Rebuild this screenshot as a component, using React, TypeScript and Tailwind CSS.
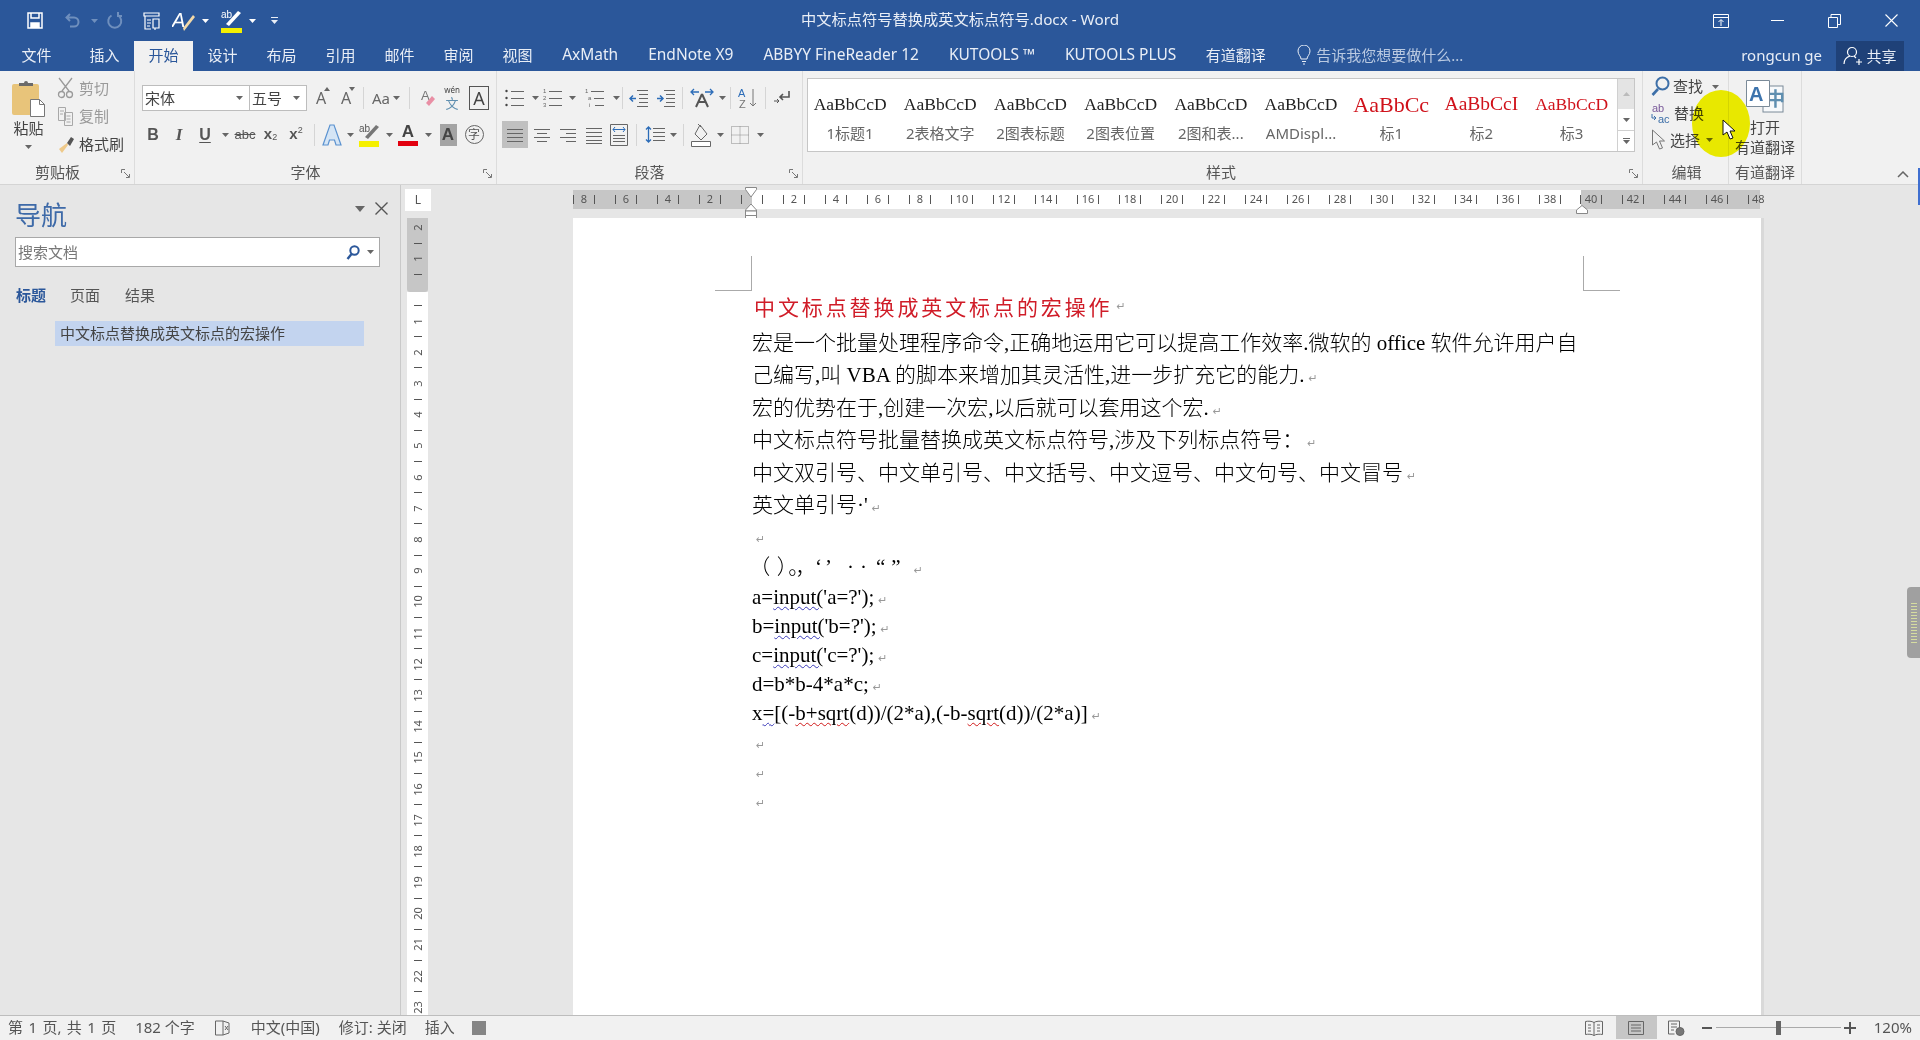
import type { ReactNode } from "react";

const tabs = ["插入", "开始", "设计", "布局", "引用", "邮件", "审阅", "视图"];
const latinTabs = ["AxMath", "EndNote X9", "ABBYY FineReader 12", "KUTOOLS ™", "KUTOOLS PLUS"];

const styles = [
  { preview: "AaBbCcD", label: "1标题1", cls: "text-[17.500px] text-[#222]" },
  { preview: "AaBbCcD", label: "2表格文字", cls: "text-[17.500px] text-[#222]" },
  { preview: "AaBbCcD", label: "2图表标题", cls: "text-[17.500px] text-[#222]" },
  { preview: "AaBbCcD", label: "2图表位置", cls: "text-[17.500px] text-[#222]" },
  { preview: "AaBbCcD", label: "2图和表...", cls: "text-[17.500px] text-[#222]" },
  { preview: "AaBbCcD", label: "AMDispl...", cls: "text-[17.500px] text-[#222]" },
  { preview: "AaBbCc", label: "标1", cls: "text-[22px] text-[#d0121b]" },
  { preview: "AaBbCcI", label: "标2", cls: "text-[19.500px] text-[#d0121b]" },
  { preview: "AaBbCcD", label: "标3", cls: "text-[17.500px] text-[#d0121b]" },
];

function Slot({ className = "", children }: { className?: string; children?: ReactNode }) {
  return <div className={`flex h-full shrink-0 items-center justify-center ${className}`}>{children}</div>;
}

function Caret({ color = "#666" }: { color?: string }) {
  return (
    <svg width="7" height="4" viewBox="0 0 7 4">
      <path d="M0 0h7L3.5 4z" fill={color} />
    </svg>
  );
}

function Sep() {
  return <div className="h-[22px] w-px bg-[#d5d5d5]" />;
}

function Launcher() {
  return (
    <svg className="absolute bottom-[6px] right-[4px]" width="9" height="9" viewBox="0 0 9 9" fill="none" stroke="#777">
      <path d="M.5 4V.5H4M3 3l5 5M8.5 5v3.5H5" />
    </svg>
  );
}

function Group({ label, className, labelClass = "", launcher = true, children }: { label: string; className: string; labelClass?: string; launcher?: boolean; children: ReactNode }) {
  return (
    <div className={`relative flex h-full shrink-0 flex-col border-r border-[#dcdcdc] ${className}`}>
      <div className="min-h-0 flex-1">{children}</div>
      <div className={`h-[23px] text-center text-[15px] leading-[22px] text-[#555] ${labelClass}`}>{label}</div>
      {launcher && <Launcher />}
    </div>
  );
}

function Lines({ rows, x = 1, w = 16 }: { rows: number[]; x?: number; w?: number }) {
  return (
    <svg width="18" height="18" viewBox="0 0 18 18" stroke="#666" strokeWidth="1">
      {rows.map((y) => (
        <path key={y} d={`M${x} ${y}.5h${w}`} />
      ))}
    </svg>
  );
}

function Bullets({ kind }: { kind: number }) {
  return (
    <svg width="22" height="20" viewBox="0 0 22 20" stroke="#666" fill="#666" fontSize="6" fontFamily="Liberation Sans">
      {[3, 10, 17].map((y, i) => (
        <g key={y}>
          {kind === 0 ? (
            <circle cx="2.5" cy={y} r="1.2" fill="#444" stroke="none" />
          ) : (
            <text x={kind === 2 && i > 0 ? 3 + i : 1} y={y + 2} stroke="none">
              {kind === 2 ? ["1", "a", "i"][i] : i + 1}
            </text>
          )}
          <path d={`M${kind === 2 && i > 0 ? 9 + i : 7} ${y}.5H20`} fill="none" />
        </g>
      ))}
    </svg>
  );
}

function FontSizeA({ up }: { up: boolean }) {
  return (
    <span className="relative font-['Noto_Sans'] text-[16px] text-[#666]">
      A
      <svg className="absolute right-[-4px] top-[1px]" width="6" height="4" viewBox="0 0 6 4">
        <path d={up ? "M0 4h6L3 0z" : "M0 0h6L3 4z"} fill="#666" />
      </svg>
    </span>
  );
}

function Clipboard() {
  return (
    <svg width="36" height="38" viewBox="0 0 36 38">
      <rect x="1" y="5" width="27" height="31" rx="2" fill="#e8c47a" />
      <path d="M8 6V4h5a2 2 0 0 1 4 0h5v3H8z" fill="#6a6a6a" />
      <path d="M19.500 20.500h9l5 5v12h-14z" fill="#fff" stroke="#777" />
      <path d="M28.500 20.500v5h5" fill="none" stroke="#777" />
    </svg>
  );
}

function Youdao() {
  return (
    <svg width="40" height="36" viewBox="0 0 40 36" fontFamily="Liberation Sans" fontWeight="700">
      <rect x="18" y="7" width="20" height="26" fill="#f7f9fb" stroke="#7a8a98" />
      <text x="21" y="27" fontSize="19" fill="#5f8fb0" fontFamily="Noto Sans CJK SC">中</text>
      <path d="M1.500 1.500h23v26h-23z" fill="#fff" stroke="#7a8a98" />
      <text x="4" y="22" fontSize="20" fill="#3d74ad">A</text>
    </svg>
  );
}

function RulerCell({ n, half }: { n?: number; half?: "l" | "r" }) {
  if (half) {
    return (
      <div className={`flex h-full w-[21px] shrink-0 items-center ${half === "l" ? "justify-start pl-[10px]" : "justify-end pr-[10px]"}`}>
        <span className="h-[9px] w-px bg-[#555]" />
      </div>
    );
  }
  return (
    <div className="flex h-full w-[42px] shrink-0 items-center justify-between px-[10px] text-[11px] text-[#555]">
      <span className="h-[9px] w-px bg-[#555]" />
      <span>{n}</span>
      <span className="h-[9px] w-px bg-[#555]" />
    </div>
  );
}

function VCell({ n }: { n?: number }) {
  return (
    <div className="flex h-[15.6px] shrink-0 items-center justify-center text-[11px] leading-none text-[#555]">
      {n !== undefined ? <span className="-rotate-90">{n}</span> : <span className="h-px w-[8px] bg-[#555]" />}
    </div>
  );
}

function Mark() {
  return <span className="ml-[4px] font-['DejaVu_Sans'] text-[11px] font-normal text-[#999]">↵</span>;
}

function Wavy({ children, red }: { children: ReactNode; red?: boolean }) {
  return (
    <span className={`underline decoration-wavy decoration-1 underline-offset-2 ${red ? "decoration-[#d01a1a]" : "decoration-[#3a3ab8]"}`}>
      {children}
    </span>
  );
}

function DocLine({ className = "h-[32.5px]", children }: { className?: string; children?: ReactNode }) {
  return <div className={`flex items-center whitespace-pre ${className}`}><span>{children}</span></div>;
}

export default function App() {
  const after: number[] = [];
  for (let i = 3; i <= 23; i++) after.push(i);

  return (
    <div className="relative flex h-[1040px] w-[1920px] flex-col overflow-hidden bg-[#e6e6e6] font-['Noto_Sans','Noto_Sans_CJK_SC',sans-serif] text-[#444]">
      {/* title bar */}
      <div className="flex h-[41px] shrink-0 items-center bg-[#2b579a] text-[#e9eef6]">
        <div className="flex h-full flex-1 items-center">
          <svg className="ml-[27px]" width="16" height="17" viewBox="0 0 16 17" fill="none" stroke="#fff" strokeWidth="1.500">
            <path d="M1 1h14v15H1z" />
            <path d="M4 1v5h8V1" />
            <path d="M4 16v-5h8v5" fill="#fff" />
          </svg>
          <svg className="ml-[22px]" width="16" height="16" viewBox="0 0 16 16" fill="none" stroke="#6f8fbd" strokeWidth="2">
            <path d="M5 1 1.500 4.500 5 8M2 4.500h7a4.500 4.500 0 0 1 0 9H5" />
          </svg>
          <span className="ml-[10px]"><Caret color="#6f8fbd" /></span>
          <svg className="ml-[8px]" width="18" height="18" viewBox="0 0 18 18" fill="none" stroke="#6f8fbd" strokeWidth="2">
            <path d="M12 3.500a6.500 6.500 0 1 1-6.500 0M12 0v4h4" />
          </svg>
          <svg className="ml-[19px]" width="18" height="18" viewBox="0 0 18 18" fill="none" stroke="#fff" strokeWidth="1.200">
            <path d="M1 1h15v3H1zM2 4v13h6M4 8h4M4 11h4M4 14h3M10 7h6v9h-6zM12 16v2" />
          </svg>
          <svg className="ml-[11px]" width="26" height="22" viewBox="0 0 26 22">
            <text x="0" y="17" fontSize="20" fontStyle="italic" fill="#fff" fontFamily="Liberation Sans">A</text>
            <path d="M23 7 12 21l-1-3L21 5z" fill="#f3d9a8" />
          </svg>
          <span className="ml-[4px]"><Caret color="#fff" /></span>
          <svg className="ml-[12px]" width="22" height="24" viewBox="0 0 22 24">
            <text x="0" y="9" fontSize="10" fill="#fff" fontFamily="Liberation Sans">ab</text>
            <path d="M20 4 8 17l-3-2L17 2z" fill="#fff" />
            <path d="M0 19h21v5H0z" fill="#f5f000" />
          </svg>
          <span className="ml-[6px]"><Caret color="#fff" /></span>
          <svg className="ml-[15px]" width="7" height="7" viewBox="0 0 7 7">
            <path d="M0 0h7v1H0zM0 3h7L3.500 7z" fill="#e9eef6" />
          </svg>
        </div>
        <div className="pb-[2px] text-[15.250px]">中文标点符号替换成英文标点符号.docx - Word</div>
        <div className="flex h-full flex-1 items-center justify-end">
          {/* window buttons */}
          <Slot className="w-[57px]">
            <svg width="16" height="14" viewBox="0 0 16 14" fill="none" stroke="#fff">
              <path d="M.5.500h15v13H.5zM.5 3.500h15M8 12V6M5.500 8 8 5.500 10.500 8" />
            </svg>
          </Slot>
          <Slot className="w-[57px]"><span className="h-px w-[13px] bg-white" /></Slot>
          <Slot className="w-[57px]">
            <svg width="13" height="14" viewBox="0 0 13 14" fill="none" stroke="#fff">
              <path d="M.5 3.500h9v10h-9zM3 3.500v-3h9.500v10H9.500" />
            </svg>
          </Slot>
          <Slot className="w-[57px]">
            <svg width="13" height="13" viewBox="0 0 13 13" stroke="#fff" strokeWidth="1.100">
              <path d="m.5.500 12 12M12.500.500l-12 12" />
            </svg>
          </Slot>
        </div>
      </div>

      {/* tabs */}
      <div className="flex h-[30px] shrink-0 items-stretch bg-[#2b579a] text-[15px] text-[#e9eef6]">
        <div className="flex w-[75px] items-center justify-center pb-[2px] pr-[2px]">文件</div>
        {tabs.map((t) => (
          <div
            key={t}
            className={`flex items-center px-[14.500px] pb-[2px] ${t === "开始" ? "bg-[#f1f1f1] text-[#2b579a]" : ""}`}
          >
            {t}
          </div>
        ))}
        {latinTabs.map((t) => (
          <div key={t} className="flex items-center px-[15px] pb-[2px] text-[15.500px]">{t}</div>
        ))}
        <div className="flex items-center px-[14.500px] pb-[2px]">有道翻译</div>
        <div className="ml-[17px] flex items-center gap-[5px] pb-[2px] text-[#b9c9e1]">
          <svg width="14" height="20" viewBox="0 0 14 20" fill="none" stroke="#e9eef6">
            <path d="M4 14c0-3-3-4-3-8a6 6 0 0 1 12 0c0 4-3 5-3 8zM5 16.500h4M6 19h2" />
          </svg>
          告诉我您想要做什么...
        </div>
        <div className="ml-auto flex items-center pb-[2px]">rongcun ge</div>
        <div className="ml-[14px] mr-[16px] flex w-[68px] items-center justify-center gap-[3px] bg-[#1f4178]">
          <svg width="20" height="20" viewBox="0 0 20 20" fill="none" stroke="#fff" strokeWidth="1.200">
            <circle cx="9" cy="6" r="4.500" />
            <path d="M1 18c0-4 3-7 6-8M11 10l2 2M16 13v6M13 16h6" />
          </svg>
          共享
        </div>
      </div>

      {/* ribbon */}
      <div className="flex h-[114px] shrink-0 border-b border-[#d4d4d4] bg-[#f1f1f1]">
        <Group label="剪贴板" className="w-[135px]" labelClass="pr-[19px]">
          <div className="flex h-full">
            <div className="flex w-[57px] flex-col items-center pt-[8px]">
              <Clipboard />
              <div className="mt-[1px] text-[15px] leading-[20px]">粘贴</div>
              <div className="mt-[7px]"><Caret /></div>
            </div>
            <div className="flex flex-col pt-[3px] text-[15px]">
              <div className="flex h-[28px] items-center gap-[5px] text-[#9a9a9a]">
                <svg width="17" height="22" viewBox="0 0 17 22" fill="none" stroke="#9a9a9a" strokeWidth="1.300">
                  <path d="m2 1 10 13M15 1 5 14" />
                  <circle cx="4.500" cy="17.500" r="3" />
                  <circle cx="12.500" cy="17.500" r="3" />
                </svg>
                剪切
              </div>
              <div className="flex h-[28px] items-center gap-[5px] text-[#9a9a9a]">
                <svg width="17" height="20" viewBox="0 0 17 20" fill="none" stroke="#a8a8a8">
                  <path d="M1.500 1.500h7v13h-7zM7.500 6.500h8v13h-8zM3 5h4M3 8h3M9.500 10h4M9.500 13h4M9.500 16h4" />
                </svg>
                复制
              </div>
              <div className="flex h-[28px] items-center gap-[5px] text-[#444]">
                <svg width="17" height="18" viewBox="0 0 17 18">
                  <path d="M10 8 2 14l3 4 6-8z" fill="#eec98a" />
                  <path d="m10 8 4-6 3 2-4 7z" fill="#555" />
                </svg>
                格式刷
              </div>
            </div>
          </div>
        </Group>

        <Group label="字体" className="w-[362px]" labelClass="pr-[20px]">
          <div className="mt-[14px] flex h-[26px] pl-[7px]">
            <div className="flex w-[108px] items-center justify-between border border-[#bdbdbd] bg-white pl-[2px] pr-[6px] font-['Noto_Sans_CJK_SC'] text-[15px]">宋体<Caret /></div>
            <div className="flex w-[57px] items-center justify-between border border-l-0 border-[#bdbdbd] bg-white pl-[2px] pr-[6px] text-[15px]">五号<Caret /></div>
            <Slot className="w-[28px]"><FontSizeA up /></Slot>
            <Slot className="w-[22px]"><FontSizeA up={false} /></Slot>
            <Slot className="w-[12px]"><Sep /></Slot>
            <Slot className="w-[34px] gap-[3px] text-[15px] text-[#666]">Aa<Caret /></Slot>
            <Slot className="w-[12px]"><Sep /></Slot>
            <Slot className="w-[24px] pl-[2px]">
              <svg width="16" height="20" viewBox="0 0 16 20">
                <text x="1" y="12" fontSize="13" fill="#777" fontFamily="Liberation Sans">A</text>
                <path d="m6 15 6-7 3 3-6 7z" fill="#e98fa5" />
              </svg>
            </Slot>
            <Slot className="w-[26px]">
              <svg width="20" height="30" viewBox="0 -2 20 30" textAnchor="middle">
                <text x="10" y="8" fontSize="8" fill="#444" fontFamily="Noto Sans">wén</text>
                <text x="10" y="23" fontSize="13" fill="#5f8fb0" fontFamily="Noto Sans CJK SC">文</text>
              </svg>
            </Slot>
            <Slot className="w-[28px]">
              <span className="flex h-[24px] w-[20px] items-center justify-center border border-[#555] text-[18px] leading-none text-[#444]">A</span>
            </Slot>
          </div>
          <div className="mt-[10px] flex h-[27px] pl-[5px] text-[#555]">
            <Slot className="w-[26px] font-['Liberation_Sans'] text-[16px] font-bold">B</Slot>
            <Slot className="w-[26px] font-['Liberation_Serif'] text-[17px] italic font-bold">I</Slot>
            <Slot className="w-[26px] font-['Liberation_Sans'] text-[16px] font-bold underline underline-offset-2">U</Slot>
            <Slot className="w-[14px]"><Caret /></Slot>
            <Slot className="w-[26px] font-['Liberation_Sans'] text-[13px] line-through">abc</Slot>
            <Slot className="w-[25px] font-['Liberation_Sans'] text-[15px] font-bold">x<sub className="text-[9px] font-normal">2</sub></Slot>
            <Slot className="w-[26px] font-['Liberation_Sans'] text-[15px] font-bold">x<sup className="text-[9px] font-normal">2</sup></Slot>
            <Slot className="w-[10px]"><Sep /></Slot>
            <Slot className="w-[26px]">
              <svg width="20" height="22" viewBox="0 0 20 22">
                <path d="M8 1h4l7 20h-5l-1.500-5h-5L6 21H1z" fill="#d5e5f5" stroke="#5b92d0" strokeWidth="1.200" />
              </svg>
            </Slot>
            <Slot className="w-[10px]"><Caret /></Slot>
            <Slot className="ml-[1px] w-[28px]">
              <svg width="22" height="24" viewBox="0 0 22 24">
                <text x="0" y="9" fontSize="10" fill="#555" fontFamily="Liberation Sans">ab</text>
                <path d="M20 4 9 16l-3-2L17 2z" fill="#777" />
                <path d="M0 18h20v6H0z" fill="#f5f000" />
              </svg>
            </Slot>
            <Slot className="w-[10px]"><Caret /></Slot>
            <Slot className="w-[28px]">
              <div className="flex flex-col items-center leading-none">
                <span className="font-['Liberation_Sans'] text-[17px] leading-[17px] font-bold text-[#444]">A</span>
                <span className="mt-[1px] h-[5px] w-[20px] bg-[#e2000f]" />
              </div>
            </Slot>
            <Slot className="w-[12px]"><Caret /></Slot>
            <Slot className="w-[28px]">
              <span className="flex h-[22px] w-[17px] items-center justify-center bg-[#a4a4a4] font-['Liberation_Sans'] text-[17px] font-bold text-[#444]">A</span>
            </Slot>
            <Slot className="w-[24px]">
              <span className="flex h-[19px] w-[19px] items-center justify-center rounded-full border border-[#666] text-[12px] leading-none">字</span>
            </Slot>
          </div>
        </Group>

        <Group label="段落" className="w-[306px]">
          <div className="mt-[14px] flex h-[26px] pl-[3px]">
            <Slot className="w-[30px]"><Bullets kind={0} /></Slot>
            <Slot className="w-[10px]"><Caret /></Slot>
            <Slot className="w-[26px]"><Bullets kind={1} /></Slot>
            <Slot className="w-[12px]"><Caret /></Slot>
            <Slot className="w-[34px]"><Bullets kind={2} /></Slot>
            <Slot className="w-[8px]"><Caret /></Slot>
            <Slot className="w-[4px]"><Sep /></Slot>
            <Slot className="w-[30px]">
              <svg width="20" height="18" viewBox="0 0 20 18" stroke="#666">
                <path d="M8 1.500h11M10 5.500h9M10 9.500h9M10 13.500h9M8 17.500h11" />
                <path d="M7 9.500H1M4 6.500l-3 3 3 3" fill="none" stroke="#2b6cb8" strokeWidth="1.500" />
              </svg>
            </Slot>
            <Slot className="w-[24px]">
              <svg width="20" height="18" viewBox="0 0 20 18" stroke="#666">
                <path d="M8 1.500h11M10 5.500h9M10 9.500h9M10 13.500h9M8 17.500h11" />
                <path d="M1 9.500h6M4 6.500l3 3-3 3" fill="none" stroke="#2b6cb8" strokeWidth="1.500" />
              </svg>
            </Slot>
            <Slot className="w-[8px]"><Sep /></Slot>
            <Slot className="w-[32px]">
              <svg width="24" height="20" viewBox="0 0 24 20">
                <path d="M12 6 6 19M12 6l6 13M8.500 14h7" stroke="#555" strokeWidth="2" fill="none" />
                <path d="M2 4h7M4 1 1 4l3 3M22 4h-7M20 1l3 3-3 3" stroke="#2b6cb8" strokeWidth="1.300" fill="none" />
              </svg>
            </Slot>
            <Slot className="w-[8px]"><Caret /></Slot>
            <Slot className="w-[8px]"><Sep /></Slot>
            <Slot className="w-[28px]">
              <svg width="20" height="22" viewBox="0 0 20 22" fontFamily="Liberation Sans" fontSize="11">
                <text x="0" y="10" fill="#2b6cb8">A</text>
                <text x="1" y="21" fill="#777">Z</text>
                <path d="M15 2v17M12 16l3 3 3-3" stroke="#777" fill="none" />
              </svg>
            </Slot>
            <Slot className="w-[6px]"><Sep /></Slot>
            <Slot className="w-[28px]">
              <svg width="18" height="16" viewBox="0 0 18 16" fill="none">
                <path d="M16 1v6H7M10 4 7 7l3 3" stroke="#555" strokeWidth="1.600" />
                <path d="M1 11h5M4 9l2 2-2 2" stroke="#555" />
              </svg>
            </Slot>
          </div>
          <div className="mt-[10px] flex h-[27px] pl-[5px]">
            <Slot className="w-[26px] bg-[#c0c0c0]"><Lines rows={[3, 7, 11, 15]} /></Slot>
            <Slot className="w-[27px]">
              <svg width="18" height="18" viewBox="0 0 18 18" stroke="#666"><path d="M1 3.500h16M4 7.500h10M1 11.500h16M4 15.500h10" /></svg>
            </Slot>
            <Slot className="w-[26px]">
              <svg width="18" height="18" viewBox="0 0 18 18" stroke="#666"><path d="M1 3.500h16M7 7.500h10M1 11.500h16M7 15.500h10" /></svg>
            </Slot>
            <Slot className="w-[25px]"><Lines rows={[2, 6, 10, 14, 17]} /></Slot>
            <Slot className="w-[25px]">
              <svg width="18" height="22" viewBox="0 0 18 22" fill="none" stroke="#666">
                <path d="M.5.500h17v21H.5zM3 11.500h12M3 14.500h12M3 17.500h12" />
                <path d="M3 5.500h12M5 3 3 5.500 5 8M13 3l2 2.500L13 8" stroke="#2b6cb8" />
              </svg>
            </Slot>
            <Slot className="w-[10px]"><Sep /></Slot>
            <Slot className="w-[28px]">
              <svg width="20" height="20" viewBox="0 0 20 20" fill="none">
                <path d="M8 3.500h12M8 7.500h12M8 11.500h12M8 15.500h12" stroke="#666" />
                <path d="M3.500 2v15M1 4.500 3.500 2 6 4.500M1 14.500 3.500 17 6 14.500" stroke="#2b6cb8" strokeWidth="1.300" />
              </svg>
            </Slot>
            <Slot className="w-[8px]"><Caret /></Slot>
            <Slot className="w-[12px]"><Sep /></Slot>
            <Slot className="w-[24px]">
              <svg width="22" height="24" viewBox="0 0 22 24" fill="none" stroke="#666">
                <path d="m10 2 7 9-6 6-6-6zM8 1l3 3" />
                <path d="M1.500 18.500h19v5h-19z" fill="#fff" />
              </svg>
            </Slot>
            <Slot className="w-[14px]"><Caret /></Slot>
            <Slot className="w-[26px]">
              <svg width="18" height="18" viewBox="0 0 18 18" fill="none" stroke="#888" strokeDasharray="1 1">
                <path d="M.5.500h17v17H.5zM9 .5v17M.5 9h17" />
              </svg>
            </Slot>
            <Slot className="w-[14px]"><Caret /></Slot>
          </div>
        </Group>

        <Group label="样式" className="w-[840px] pl-[4px] pr-[7px]">
          <div className="mt-[7px] flex h-[74px] border border-[#c6c6c6] bg-white">
            <div className="flex flex-1 -ml-[3px]">
              {styles.map((s) => (
                <div key={s.label} className="flex w-[90.200px] flex-col items-center">
                  <div className={`flex h-[48px] items-center pt-[2px] font-['Liberation_Serif','Noto_Sans_CJK_SC',serif] ${s.cls}`}>{s.preview}</div>
                  <div className="-mt-[3px] text-[15px] leading-[18px] text-[#666]">{s.label}</div>
                </div>
              ))}
            </div>
            <div className="flex w-[17px] flex-col border-l border-[#d0d0d0] bg-white">
              <div className="flex h-[30px] items-center justify-center bg-[#e4e4e4]">
                <svg width="7" height="4" viewBox="0 0 7 4"><path d="M0 4h7L3.500 0z" fill="#bbb" /></svg>
              </div>
              <div className="flex h-[22px] items-center justify-center border-b border-[#d0d0d0]"><Caret /></div>
              <div className="flex flex-1 flex-col items-center justify-center gap-[1px]">
                <span className="h-px w-[7px] bg-[#666]" />
                <Caret />
              </div>
            </div>
          </div>
        </Group>

        <Group label="编辑" className="w-[86px] pl-[8px]" labelClass="pr-[6px]" launcher={false}>
          <div className="flex flex-col pt-[2px] text-[15px]">
            <div className="flex h-[27px] items-center gap-[3px]">
              <svg width="19" height="21" viewBox="0 0 19 21" fill="none" stroke="#3d6fa8" strokeWidth="2">
                <circle cx="11.500" cy="7.500" r="6" />
                <path d="m7 13-5.500 6" strokeWidth="2.600" />
              </svg>
              查找
              <span className="ml-[6px]"><Caret /></span>
            </div>
            <div className="flex h-[27px] items-center gap-[3px]">
              <svg width="20" height="22" viewBox="0 0 20 22" fontFamily="Liberation Sans" fontSize="11">
                <text x="1" y="9" fill="#7a5a9a">ab</text>
                <text x="7" y="20" fill="#3d6fa8">ac</text>
                <path d="M1 11v4h4M3 13l2 2-2 2" fill="none" stroke="#3d6fa8" />
              </svg>
              替换
            </div>
            <div className="flex h-[26px] items-center gap-[4px]">
              <svg width="15" height="22" viewBox="0 0 15 22" fill="none" stroke="#777">
                <path d="M1.500 1v15l4-3 3 7 3-1-3-7h5z" />
              </svg>
              选择
              <span className="ml-[2px]"><Caret /></span>
            </div>
          </div>
        </Group>

        <Group label="有道翻译" className="w-[73px]" launcher={false}>
          <div className="flex flex-col items-center pt-[8px]">
            <Youdao />
            <div className="mt-[2px] text-[15px] leading-[20px]">打开</div>
            <div className="text-[15px] leading-[20px]">有道翻译</div>
          </div>
        </Group>

        <div className="flex flex-1 items-end justify-end pb-[6px] pr-[11px]">
          <svg width="12" height="7" viewBox="0 0 12 7" fill="none" stroke="#666" strokeWidth="1.500">
            <path d="m1 6 5-5 5 5" />
          </svg>
        </div>
      </div>

      {/* work area */}
      <div className="flex min-h-0 flex-1">
        {/* navigation pane */}
        <div className="flex w-[401px] shrink-0 flex-col border-r border-[#c9c9c9] px-[15px]">
          <div className="flex h-[52px] w-[373px] items-start justify-between">
            <div className="pt-[12px] text-[26px] leading-[36px] text-[#3e6aa8]">导航</div>
            <div className="flex items-center gap-[10px] pt-[17px]">
              <svg width="10" height="6" viewBox="0 0 10 6"><path d="M0 0h10L5 6z" fill="#666" /></svg>
              <svg width="13" height="13" viewBox="0 0 13 13" stroke="#555" strokeWidth="1.400"><path d="m.5.500 12 12M12.500.500l-12 12" /></svg>
            </div>
          </div>
          <div className="flex h-[30px] w-[365px] items-center justify-between border border-[#a8a8a8] bg-white pl-[2px] pr-[5px] text-[15px] text-[#777]">
            搜索文档
            <span className="flex items-center gap-[7px]">
              <svg width="14" height="15" viewBox="0 0 14 15" fill="none" stroke="#2b579a" strokeWidth="2">
                <circle cx="8.500" cy="5.500" r="4.200" />
                <path d="m5.500 9-4 5" strokeWidth="2.400" />
              </svg>
              <Caret />
            </span>
          </div>
          <div className="mt-[17px] flex h-[22px] items-center text-[15px]">
            <span className="w-[55px] pl-px font-bold text-[#2b579a]">标题</span>
            <span className="w-[55px] text-[#555]">页面</span>
            <span className="text-[#555]">结果</span>
          </div>
          <div className="ml-[40px] mt-[15px] flex h-[25px] w-[309px] items-center bg-[#c3d4ef] pb-[1px] pl-[5px] text-[15px] text-[#444]">
            中文标点替换成英文标点的宏操作
          </div>
        </div>

        {/* vertical ruler */}
        <div className="flex w-[172px] shrink-0 flex-col pl-[4px]">
          <div className="mt-[4px] flex h-[22px] w-[26px] items-center justify-center bg-white text-[12px] leading-none text-[#555]">L</div>
          <div className="ml-[2px] mt-[7px] flex w-[21px] flex-1 flex-col overflow-hidden">
            <div className="flex h-[74px] shrink-0 flex-col rounded-b-[3px] bg-[#c6c6c6] pt-[1.800px]">
              <VCell n={2} />
              <VCell />
              <VCell n={1} />
              <VCell />
            </div>
            <div className="flex flex-1 flex-col bg-white pt-[5.800px]">
              <VCell />
              <VCell n={1} />
              <VCell />
              <VCell n={2} />
              <VCell />
              {after.map((n) => (
                <div key={n} className="contents">
                  <VCell n={n} />
                  <VCell />
                </div>
              ))}
            </div>
          </div>
        </div>

        {/* document column */}
        <div className="relative flex w-[1191px] shrink-0 flex-col">
          <div className="mt-[5px] flex h-[19px] shrink-0">
            <div className="flex w-[179px] justify-end overflow-hidden bg-[#c6c6c6]">
              {[8, 6, 4, 2].map((n) => <RulerCell key={n} n={n} />)}
              <RulerCell half="l" />
            </div>
            <div className="flex w-[829px] overflow-hidden bg-white">
              <RulerCell half="r" />
              {[2, 4, 6, 8, 10, 12, 14, 16, 18, 20, 22, 24, 26, 28, 30, 32, 34, 36, 38].map((n) => <RulerCell key={n} n={n} />)}
            </div>
            <div className="flex w-[179px] bg-[#c6c6c6]">
              <div className="-ml-[11px] flex h-full shrink-0">
                {[40, 42, 44, 46].map((n) => <RulerCell key={n} n={n} />)}
                <div className="flex h-full items-center gap-[3px] pl-[10px] text-[11px] text-[#555]">
                  <span className="h-[9px] w-px bg-[#555]" />
                  <span>48</span>
                </div>
              </div>
            </div>
          </div>

          {/* indent markers */}
          <svg className="absolute left-[172px] top-[2px]" width="12" height="33" viewBox="0 0 12 33" fill="#fff" stroke="#888">
            <path d="M.5.500h11v2L6 10 .5 2.500z" />
            <path d="M6 17 .5 23v1h11v-1z" />
            <path d="M.5 24h11v9H.5zM.5 28.500h11" />
          </svg>
          <svg className="absolute left-[1003px] top-[20px]" width="12" height="9" viewBox="0 0 12 9" fill="#fff" stroke="#888">
            <path d="M6 .5 .5 5v3.500h11V5z" />
          </svg>

          {/* page */}
          <div className="relative mt-[9px] min-h-0 flex-1 border-r-[3px] border-[#d9d9d9] bg-white pl-[179px] font-['Liberation_Serif','Noto_Sans_CJK_SC',serif] text-[21px] font-light text-black">
            <div className="absolute left-[142px] top-[38px] h-[35px] w-[37px] border-b border-r border-[#aaa]" />
            <div className="absolute left-[1010px] top-[38px] h-[35px] w-[37px] border-b border-l border-[#aaa]" />

            <div className="mt-[72px] flex h-[32px] items-center pl-[2px] font-['Noto_Sans_CJK_SC'] text-[21px] font-normal leading-none tracking-[2.900px] text-[#d01c28]">
              中文标点替换成英文标点的宏操作<Mark />
            </div>
            <div className="mt-[5px]">
              <DocLine>宏是一个批量处理程序命令,正确地运用它可以提高工作效率.微软的 office 软件允许用户自</DocLine>
              <DocLine>己编写,叫 VBA 的脚本来增加其灵活性,进一步扩充它的能力.<Mark /></DocLine>
              <DocLine>宏的优势在于,创建一次宏,以后就可以套用这个宏.<Mark /></DocLine>
              <DocLine>中文标点符号批量替换成英文标点符号,涉及下列标点符号：<Mark /></DocLine>
              <DocLine>中文双引号、中文单引号、中文括号、中文逗号、中文句号、中文冒号<Mark /></DocLine>
              <DocLine>英文单引号·'<Mark /></DocLine>
              <DocLine className="h-[32.500px] pb-[4px]"><Mark /></DocLine>
              <DocLine className="h-[28.500px] pb-[2px]">
                <span className="ml-[7px] [font-feature-settings:'palt']">（</span>
                <span className="ml-[8px] [font-feature-settings:'palt']">）</span>
                <span className="[font-feature-settings:'palt']">。</span>
                <span className="-ml-[2px] [font-feature-settings:'palt']">，</span>
                <span className="ml-[8px]">‘</span>
                <span className="ml-[3px]">’</span>
                <span className="ml-[15px]">·</span>
                <span className="ml-[6px]">·</span>
                <span className="ml-[9px]">“</span>
                <span className="ml-[6px]">”</span>
                <span className="ml-[9px]"><Mark /></span>
              </DocLine>
              <DocLine className="h-[29px]">a=<Wavy>input(</Wavy>'a=?');<Mark /></DocLine>
              <DocLine className="h-[29px]">b=<Wavy>input(</Wavy>'b=?');<Mark /></DocLine>
              <DocLine className="h-[29px]">c=<Wavy>input(</Wavy>'c=?');<Mark /></DocLine>
              <DocLine className="h-[29px]">d=b*b-4*a*c;<Mark /></DocLine>
              <DocLine className="h-[29px]">x<Wavy>=</Wavy>[(-<Wavy red>b+sqrt</Wavy>(d))/(2*a),(-b-<Wavy red>sqrt</Wavy>(d))/(2*a)]<Mark /></DocLine>
              <DocLine className="h-[29px]"><Mark /></DocLine>
              <DocLine className="h-[29px]"><Mark /></DocLine>
              <DocLine className="h-[29px]"><Mark /></DocLine>
            </div>
          </div>
        </div>
      </div>

      {/* status bar */}
      <div className="flex h-[25px] shrink-0 items-center border-t border-[#bdbdbd] bg-[#f1f1f1] pb-[1px] pl-[8px] pr-[8px] text-[15px] text-[#555]">
        <span className="[word-spacing:1.500px]">第 1 页, 共 1 页</span>
        <span className="ml-[19px]">182 个字</span>
        <svg className="ml-[19px]" width="18" height="16" viewBox="0 0 18 16" fill="none" stroke="#666">
          <path d="M9 1H1.500v14H9zM9 1l6 2v10l-6 2M11 6l3 4M14 6l-3 4" />
        </svg>
        <span className="ml-[19px]">中文(中国)</span>
        <span className="ml-[19px]">修订: 关闭</span>
        <span className="ml-[18px]">插入</span>
        <span className="ml-[17px] h-[14px] w-[14px] bg-[#858585]" />
        <div className="ml-auto flex h-full items-center">
          <svg width="20" height="16" viewBox="0 0 20 16" fill="none" stroke="#666">
            <path d="M10 2.500C8 1 4 1 1.500 1.500v13c2.500-.5 6.500-.5 8.500 1 2-1.500 6-1.500 8.500-1v-13C16 1 12 1 10 2.500zM10 2.500v13M4 5h3M4 8h3M4 11h3M13 5h3M13 8h3M13 11h3" />
          </svg>
          <Slot className="ml-[12px] w-[41px] bg-[#c6c6c6]">
            <svg width="16" height="14" viewBox="0 0 16 14" fill="none" stroke="#666">
              <path d="M.5.500h15v13H.5zM3 4h10M3 7h10M3 10h10" />
            </svg>
          </Slot>
          <svg className="ml-[10px]" width="18" height="16" viewBox="0 0 18 16" fill="none" stroke="#666">
            <path d="M1.500 1h11v7M1.500 1v13h6M4 4h6M4 7h6M4 10h3" />
            <circle cx="13" cy="11.500" r="4" fill="#777" />
          </svg>
          <span className="ml-[17px] h-[2px] w-[10px] bg-[#555]" />
          <div className="ml-[4px] flex w-[125px] items-center justify-center">
            <span className="h-px flex-1 bg-[#aaa]" />
            <span className="h-[14px] w-[5px] bg-[#666]" />
            <span className="h-px flex-1 bg-[#aaa]" />
          </div>
          <svg className="ml-[3px]" width="12" height="12" viewBox="0 0 12 12" stroke="#555" strokeWidth="2">
            <path d="M6 0v12M0 6h12" />
          </svg>
          <span className="ml-[18px]">120%</span>
        </div>
      </div>

      {/* right edge overview bar */}
      <div className="absolute right-0 top-[587px] flex h-[71px] w-[13px] justify-center rounded-l-[4px] bg-[#a0a0a0] pt-[16px]">
        <div className="h-[42px] w-[6px] bg-[repeating-linear-gradient(180deg,#d5dca0_0,#d5dca0_1px,#a0a0a0_1px,#a0a0a0_3px)]" />
      </div>
      <div className="absolute right-0 top-[168px] h-[37px] w-[2px] bg-[#3f6fd0]" />

      {/* highlighted mouse pointer */}
      <div className="absolute left-[1692px] top-[90px] h-[67px] w-[58px] rounded-[50%] bg-[#f6f600] mix-blend-multiply" />
      <svg className="absolute left-[1722px] top-[119px]" width="14" height="21" viewBox="0 0 14 21" fill="#fff" stroke="#111">
        <path d="M1 1v15l4-3 3 7 3-1-3-7h5z" />
      </svg>
    </div>
  );
}
